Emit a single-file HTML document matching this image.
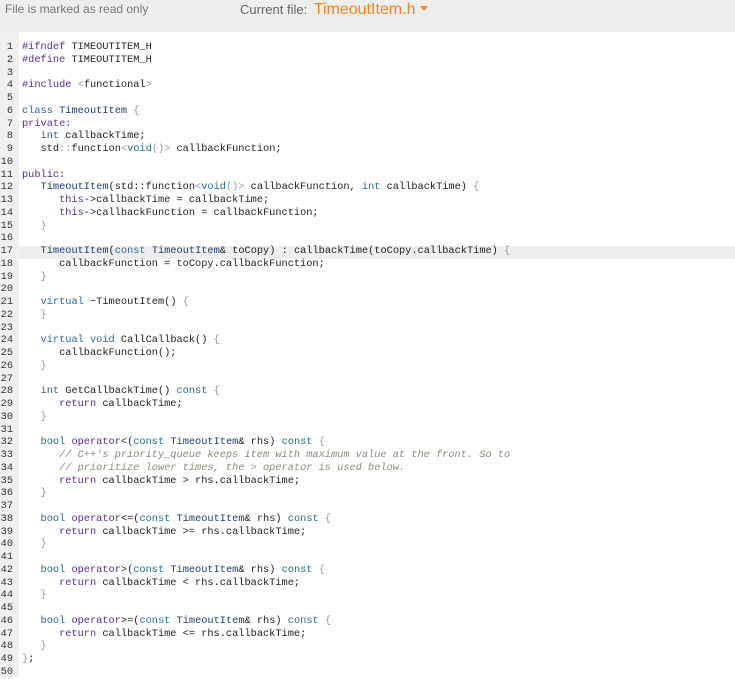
<!DOCTYPE html>
<html><head><style>
body{margin:0;width:735px;height:677px;overflow:hidden;background:#fff;font-family:"Liberation Sans",sans-serif;position:relative}
.hdr{position:absolute;left:0;top:0;width:735px;height:32px;background:#eeeeee}
.ro{position:absolute;left:5px;top:2px;font-size:12px;color:#777}
.cf{position:absolute;left:240px;top:1px;font-size:13px;color:#666}
.cf b{font-weight:normal;color:#f5841f;font-size:16px;margin-left:3px}
.tri{display:inline-block;width:0;height:0;border-left:4px solid transparent;border-right:4px solid transparent;border-top:5px solid #f5841f;margin-left:5px;vertical-align:3px}
.gut{position:absolute;left:0;top:32px;width:19px;height:645px;background:#f0f0f0}
.hl{position:absolute;left:19px;top:245.5px;width:716px;height:13px;background:#eeeeee}
pre{position:absolute;margin:0;top:41px;font-family:"Liberation Mono",monospace;font-size:10.3px;line-height:12.75px;color:#222}
.n{left:0;width:13px;text-align:right;color:#333}
.c{left:22px}
.k{color:#2a6b8f}.p{color:#5a2d91}.o{color:#999}.m{color:#8a8a7a;font-style:italic}.t{color:#1d3d6b}
</style></head><body>
<div class="hdr"><span class="ro">File is marked as read only</span><span class="cf">Current file: <b>TimeoutItem.h</b><span class="tri"></span></span></div>
<div class="gut"></div><div class="hl"></div>
<pre class="n">1
2
3
4
5
6
7
8
9
10
11
12
13
14
15
16
17
18
19
20
21
22
23
24
25
26
27
28
29
30
31
32
33
34
35
36
37
38
39
40
41
42
43
44
45
46
47
48
49
50</pre>
<pre class="c"><span class="p">#ifndef</span> TIMEOUTITEM_H
<span class="p">#define</span> TIMEOUTITEM_H

<span class="p">#include</span> <span class="o">&lt;</span>functional<span class="o">&gt;</span>

<span class="k">class</span> <span class="t">TimeoutItem</span> <span class="o">{</span>
<span class="p">private:</span>
   <span class="k">int</span> callbackTime;
   std<span class="o">::</span>function<span class="o">&lt;</span><span class="k">void</span><span class="o">()&gt;</span> callbackFunction;

<span class="p">public:</span>
   <span class="t">TimeoutItem</span>(std::function<span class="o">&lt;</span><span class="k">void</span><span class="o">()&gt;</span> callbackFunction, <span class="k">int</span> callbackTime) <span class="o">{</span>
      <span class="p">this</span>-&gt;callbackTime = callbackTime;
      <span class="p">this</span>-&gt;callbackFunction = callbackFunction;
   <span class="o">}</span>

   <span class="t">TimeoutItem</span>(<span class="k">const</span> <span class="t">TimeoutItem</span>&amp; toCopy) : callbackTime(toCopy.callbackTime) <span class="o">{</span>
      callbackFunction = toCopy.callbackFunction;
   <span class="o">}</span>

   <span class="k">virtual</span> ~TimeoutItem() <span class="o">{</span>
   <span class="o">}</span>

   <span class="k">virtual</span> <span class="k">void</span> CallCallback() <span class="o">{</span>
      callbackFunction();
   <span class="o">}</span>

   <span class="k">int</span> GetCallbackTime() <span class="k">const</span> <span class="o">{</span>
      <span class="p">return</span> callbackTime;
   <span class="o">}</span>

   <span class="k">bool</span> <span class="p">operator</span>&lt;(<span class="k">const</span> <span class="t">TimeoutItem</span>&amp; rhs) <span class="k">const</span> <span class="o">{</span>
      <span class="m">// C++'s priority_queue keeps item with maximum value at the front. So to</span>
      <span class="m">// prioritize lower times, the &gt; operator is used below.</span>
      <span class="p">return</span> callbackTime &gt; rhs.callbackTime;
   <span class="o">}</span>

   <span class="k">bool</span> <span class="p">operator</span>&lt;=(<span class="k">const</span> <span class="t">TimeoutItem</span>&amp; rhs) <span class="k">const</span> <span class="o">{</span>
      <span class="p">return</span> callbackTime &gt;= rhs.callbackTime;
   <span class="o">}</span>

   <span class="k">bool</span> <span class="p">operator</span>&gt;(<span class="k">const</span> <span class="t">TimeoutItem</span>&amp; rhs) <span class="k">const</span> <span class="o">{</span>
      <span class="p">return</span> callbackTime &lt; rhs.callbackTime;
   <span class="o">}</span>

   <span class="k">bool</span> <span class="p">operator</span>&gt;=(<span class="k">const</span> <span class="t">TimeoutItem</span>&amp; rhs) <span class="k">const</span> <span class="o">{</span>
      <span class="p">return</span> callbackTime &lt;= rhs.callbackTime;
   <span class="o">}</span>
<span class="o">}</span>;
</pre>
</body></html>
